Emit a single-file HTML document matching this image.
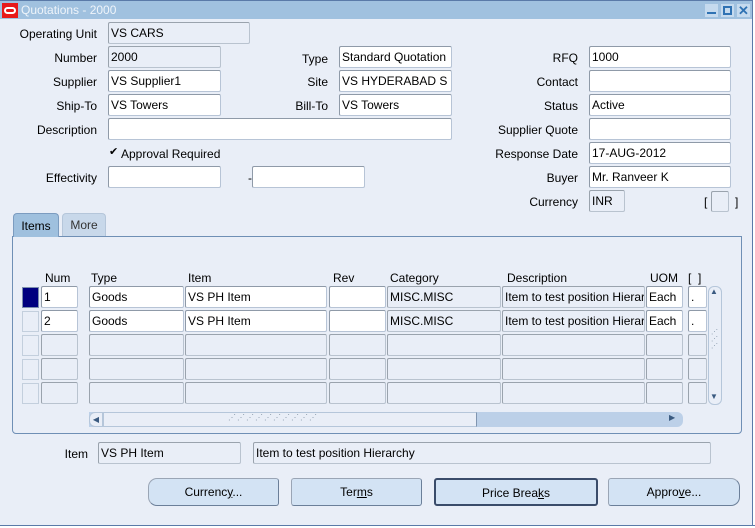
<!DOCTYPE html><html><head><style>
body{margin:0;width:755px;height:528px;background:#e9eef7;font-family:"Liberation Sans",Arial,sans-serif;font-size:12px;color:#000;position:relative;overflow:hidden}
div{position:absolute;box-sizing:border-box}
.l{text-align:right;line-height:14px}
.f{background:#fff;border:1px solid #b7c4d6;border-top-color:#8f9aa8;border-left-color:#8f9aa8;height:22px;line-height:20px;padding-left:2px;white-space:nowrap;overflow:hidden;border-radius:2px}
.d{background:#e9eef7;border:1px solid #b9c3cf;border-top-color:#9aa3ad;border-left-color:#9aa3ad;height:22px;line-height:20px;padding-left:2px;white-space:nowrap;overflow:hidden;border-radius:2px}
.h{line-height:14px}
.b{height:28px;background:#d3e3f4;border:1px solid #9aa5b5;border-bottom-color:#6b7f99;border-right-color:#6b7f99;border-radius:3px;text-align:center;line-height:26px}
</style></head><body>
<div style="left:0;top:0;width:755px;height:19px;background:#a0c1df;border-top:1px solid #5a7aa8"></div>
<div style="left:2px;top:3px;width:16px;height:15px;background:#e8191a"></div>
<div style="left:4px;top:7px;width:12px;height:7px;border:2px solid #fff;border-radius:4px"></div>
<div style="left:21px;top:3px;color:#eef4fa;font-size:12px;line-height:14px">Quotations - 2000</div>
<div style="left:705px;top:4px;width:13px;height:13px;background:#c5daee"></div><div style="left:707px;top:12px;width:9px;height:2px;background:#2f72b3"></div>
<div style="left:721px;top:4px;width:13px;height:13px;background:#c5daee"></div><div style="left:723px;top:6px;width:9px;height:9px;border:2px solid #2f72b3;border-top-width:2px"></div>
<div style="left:737px;top:4px;width:13px;height:13px;background:#c5daee;color:#2f72b3;font-weight:bold;font-size:13px;line-height:13px;text-align:center">✕</div>
<div style="left:752px;top:0;width:3px;height:528px;background:#fff;border-left:1px solid #5a7aa8"></div>
<div style="left:0;top:525px;width:755px;height:3px;background:#fff;border-top:1px solid #5a7aa8"></div>

<div class="l" style="left:0;top:27px;width:97px">Operating Unit</div><div class="d" style="left:108px;top:22px;width:142px">VS CARS</div>
<div class="l" style="left:0;top:51px;width:97px">Number</div><div class="d" style="left:108px;top:46px;width:113px">2000</div>
<div class="l" style="left:0;top:75px;width:97px">Supplier</div><div class="f" style="left:108px;top:70px;width:113px">VS Supplier1</div>
<div class="l" style="left:0;top:99px;width:97px">Ship-To</div><div class="f" style="left:108px;top:94px;width:113px">VS Towers</div>
<div class="l" style="left:0;top:123px;width:97px">Description</div><div class="f" style="left:108px;top:118px;width:344px"></div>
<div style="left:109px;top:146px;font-size:11px;line-height:12px">✔</div><div class="h" style="left:121px;top:147px">Approval Required</div>
<div class="l" style="left:0;top:171px;width:97px">Effectivity</div><div class="f" style="left:108px;top:166px;width:113px"></div>
<div class="h" style="left:248px;top:171px">-</div><div class="f" style="left:252px;top:166px;width:113px"></div>

<div class="l" style="left:240px;top:52px;width:88px">Type</div><div class="f" style="left:339px;top:46px;width:113px">Standard Quotation</div>
<div class="l" style="left:240px;top:75px;width:88px">Site</div><div class="f" style="left:339px;top:70px;width:113px">VS HYDERABAD S</div>
<div class="l" style="left:240px;top:99px;width:88px">Bill-To</div><div class="f" style="left:339px;top:94px;width:113px">VS Towers</div>

<div class="l" style="left:460px;top:51px;width:118px">RFQ</div><div class="f" style="left:589px;top:46px;width:142px">1000</div>
<div class="l" style="left:460px;top:75px;width:118px">Contact</div><div class="f" style="left:589px;top:70px;width:142px"></div>
<div class="l" style="left:460px;top:99px;width:118px">Status</div><div class="f" style="left:589px;top:94px;width:142px">Active</div>
<div class="l" style="left:460px;top:123px;width:118px">Supplier Quote</div><div class="f" style="left:589px;top:118px;width:142px"></div>
<div class="l" style="left:460px;top:147px;width:118px">Response Date</div><div class="f" style="left:589px;top:142px;width:142px">17-AUG-2012</div>
<div class="l" style="left:460px;top:171px;width:118px">Buyer</div><div class="f" style="left:589px;top:166px;width:142px">Mr. Ranveer K</div>
<div class="l" style="left:460px;top:195px;width:118px">Currency</div><div class="d" style="left:589px;top:190px;width:36px">INR</div>
<div class="h" style="left:704px;top:195px">[</div><div class="d" style="left:711px;top:191px;width:18px;height:21px"></div><div class="h" style="left:735px;top:195px">]</div>

<div style="left:12px;top:236px;width:730px;height:198px;border:1px solid #6f8fb5;border-radius:0 0 4px 4px"></div>
<div style="left:13px;top:213px;width:46px;height:24px;background:#9fc0de;border:1px solid #7c9cc0;border-bottom:none;border-radius:4px 4px 0 0;text-align:center;line-height:24px">Items</div>
<div style="left:62px;top:213px;width:44px;height:23px;background:#c8d8ea;border:1px solid #b5c6da;border-bottom:none;border-radius:4px 4px 0 0;text-align:center;line-height:22px;color:#333">More</div>

<div class="h" style="left:45px;top:271px">Num</div><div class="h" style="left:91px;top:271px">Type</div><div class="h" style="left:188px;top:271px">Item</div><div class="h" style="left:333px;top:271px">Rev</div><div class="h" style="left:390px;top:271px">Category</div><div class="h" style="left:507px;top:271px">Description</div><div class="h" style="left:650px;top:271px">UOM</div><div class="h" style="left:688px;top:271px">[ &nbsp;]</div>

<div style="left:22px;top:287px;width:17px;height:21px;background:#00007f;border:1px solid #7c8fae"></div>
<div class="f" style="left:41px;top:286px;width:37px">1</div><div class="f" style="left:89px;top:286px;width:95px">Goods</div><div class="f" style="left:185px;top:286px;width:142px">VS PH Item</div><div class="f" style="left:329px;top:286px;width:57px"></div><div class="d" style="left:387px;top:286px;width:114px">MISC.MISC</div><div class="d" style="left:502px;top:286px;width:143px">Item to test position Hierarchy</div><div class="f" style="left:646px;top:286px;width:37px">Each</div><div class="f" style="left:688px;top:286px;width:19px">.</div>

<div style="left:22px;top:311px;width:17px;height:21px;border:1px solid #c3cfdd"></div>
<div class="f" style="left:41px;top:310px;width:37px">2</div><div class="f" style="left:89px;top:310px;width:95px">Goods</div><div class="f" style="left:185px;top:310px;width:142px">VS PH Item</div><div class="f" style="left:329px;top:310px;width:57px"></div><div class="d" style="left:387px;top:310px;width:114px">MISC.MISC</div><div class="d" style="left:502px;top:310px;width:143px">Item to test position Hierarchy</div><div class="f" style="left:646px;top:310px;width:37px">Each</div><div class="f" style="left:688px;top:310px;width:19px">.</div>

<div style="left:22px;top:335px;width:17px;height:21px;border:1px solid #c3cfdd"></div>
<div class="d" style="left:41px;top:334px;width:37px"></div><div class="d" style="left:89px;top:334px;width:95px"></div><div class="d" style="left:185px;top:334px;width:142px"></div><div class="d" style="left:329px;top:334px;width:57px"></div><div class="d" style="left:387px;top:334px;width:114px"></div><div class="d" style="left:502px;top:334px;width:143px"></div><div class="d" style="left:646px;top:334px;width:37px"></div><div class="d" style="left:688px;top:334px;width:19px"></div>
<div style="left:22px;top:359px;width:17px;height:21px;border:1px solid #c3cfdd"></div>
<div class="d" style="left:41px;top:358px;width:37px"></div><div class="d" style="left:89px;top:358px;width:95px"></div><div class="d" style="left:185px;top:358px;width:142px"></div><div class="d" style="left:329px;top:358px;width:57px"></div><div class="d" style="left:387px;top:358px;width:114px"></div><div class="d" style="left:502px;top:358px;width:143px"></div><div class="d" style="left:646px;top:358px;width:37px"></div><div class="d" style="left:688px;top:358px;width:19px"></div>
<div style="left:22px;top:383px;width:17px;height:21px;border:1px solid #c3cfdd"></div>
<div class="d" style="left:41px;top:382px;width:37px"></div><div class="d" style="left:89px;top:382px;width:95px"></div><div class="d" style="left:185px;top:382px;width:142px"></div><div class="d" style="left:329px;top:382px;width:57px"></div><div class="d" style="left:387px;top:382px;width:114px"></div><div class="d" style="left:502px;top:382px;width:143px"></div><div class="d" style="left:646px;top:382px;width:37px"></div><div class="d" style="left:688px;top:382px;width:19px"></div>

<div style="left:708px;top:286px;width:14px;height:119px;border:1px solid #b5c6da;border-radius:6px"></div>
<div style="left:710px;top:287px;font-size:8px;color:#3a5a80">▲</div><div style="left:710px;top:392px;font-size:8px;color:#3a5a80">▼</div>
<div style="left:711px;top:329px;font-size:7px;color:#8899aa;line-height:7px">⋰<br>⋰<br>⋰</div>

<div style="left:89px;top:412px;width:594px;height:15px;background:#bcd0e8;border-radius:0 6px 6px 0"></div>
<div style="left:89px;top:412px;width:14px;height:15px;border:1px solid #b5c6da;border-radius:6px 0 0 6px;background:#e9eef7;font-size:8px;line-height:13px;text-align:center;color:#3a5a80">◀</div>
<div style="left:103px;top:412px;width:374px;height:15px;background:#e9eef7;border:1px solid #b5c6da;border-right-color:#8095b0"></div>
<div style="left:228px;top:413px;font-size:8px;color:#8899aa;letter-spacing:1px">⋰⋰⋰⋰⋰⋰⋰⋰⋰⋰</div>
<div style="left:669px;top:413px;font-size:8px;color:#3a5a80">▶</div>

<div class="l" style="left:0;top:447px;width:88px">Item</div>
<div class="d" style="left:98px;top:442px;width:143px">VS PH Item</div>
<div class="d" style="left:253px;top:442px;width:458px">Item to test position Hierarchy</div>

<div class="b" style="left:148px;top:478px;width:131px;border-radius:9px 3px 3px 9px">Currenc<u>y</u>...</div>
<div class="b" style="left:291px;top:478px;width:131px">Ter<u>m</u>s</div>
<div class="b" style="left:434px;top:478px;width:164px;border:2px solid #3a4c6a">Price Brea<u>k</u>s</div>
<div class="b" style="left:608px;top:478px;width:132px;border-radius:3px 9px 9px 3px">Appro<u>v</u>e...</div>
</body></html>
